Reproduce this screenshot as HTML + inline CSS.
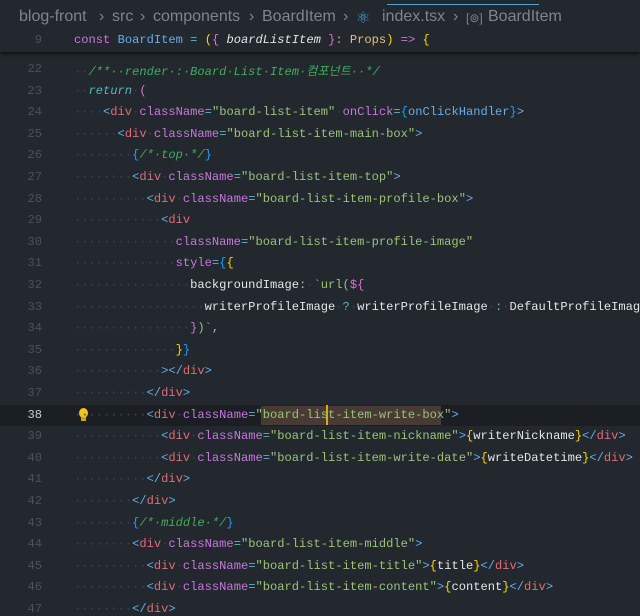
<!DOCTYPE html><html><head><meta charset="utf-8"><style>
body{margin:0;width:640px;height:608px;background:#23272e;overflow:hidden;position:relative;font-family:"Liberation Mono","Noto Sans CJK KR",monospace;font-size:12.1px;color:#abb2bf}
.bc{position:absolute;top:8px;font:16px "Liberation Sans",sans-serif;color:#7f848e;white-space:pre}
.ln{position:absolute;left:0;width:42px;text-align:right;color:#495162;font-size:12.1px}
.c{position:absolute;left:74px;white-space:pre}
.d{color:#3e4451}.t{color:#e06c75}.a{color:#c678dd}.s{color:#98c379}.y{color:#ffd700}.m{color:#da70d6}.b{color:#179fff}.w{color:#e5e5e5}.k{color:#56b6c2;font-style:italic}.cm{color:#3fae5a;font-style:italic}.v{color:#e5c07b}.bl{color:#61afef}.o{color:#56b6c2}
</style></head><body>
<div style="position:absolute;left:387px;top:4px;width:152px;height:1px;background:#4aa3c9"></div>
<div class="bc" style="left:19px">blog-front</div><div class="bc" style="left:99px">›</div>
<div class="bc" style="left:112px">src</div><div class="bc" style="left:140px">›</div>
<div class="bc" style="left:153px">components</div><div class="bc" style="left:249px">›</div>
<div class="bc" style="left:262px">BoardItem</div><div class="bc" style="left:343px">›</div>
<div class="bc" style="left:356px;color:#3fa7e0">⚛</div>
<div class="bc" style="left:382px">index.tsx</div><div class="bc" style="left:453px">›</div>
<div class="bc" style="left:466px;font-size:12px;top:11px">[⊚]</div>
<div class="bc" style="left:488px">BoardItem</div>
<div style="position:absolute;left:0;top:30px;width:640px;height:22px;background:#23272e;box-shadow:0 2px 3px #111"></div>
<div class="ln" style="top:33px">9</div>
<div class="c" style="top:33px"><span class="a">const</span> <span class="bl">BoardItem</span> <span class="o">=</span> <span class="y">(</span><span class="m">{</span> <span class="w" style="font-style:italic">boardListItem</span> <span class="m">}</span>: <span class="v">Props</span><span class="y">)</span> <span class="a">=&gt;</span> <span class="y">{</span></div>
<div style="position:absolute;left:0;top:405px;width:640px;height:21px;background:#1b1e23"></div>
<div style="position:absolute;left:261px;top:406px;width:180px;height:19px;background:#4a3a34"></div>
<div style="position:absolute;left:326px;top:405px;width:2px;height:20px;background:#e5a50a"></div>
<div style="position:absolute;left:79px;top:408px;width:9px;height:10px;border-radius:50%;background:#f2c41a"></div>
<div style="position:absolute;left:81px;top:417px;width:5px;height:4px;background:#c9a020"></div>

<div class="ln" style="top:62px">22</div><div class="c" style="top:62px"><span class="d">··</span><span class="cm">/**··render·:·Board·List·Item·컴포넌트··*/</span></div>
<div class="ln" style="top:83.6px">23</div><div class="c" style="top:83.6px"><span class="d">··</span><span class="k">return</span><span class="d">·</span><span class="m">(</span></div>
<div class="ln" style="top:105.2px">24</div><div class="c" style="top:105.2px"><span class="d">····</span><span class="bl">&lt;</span><span class="t">div</span><span class="d">·</span><span class="a">className</span><span class="o">=</span><span class="s">"board-list-item"</span><span class="d">·</span><span class="a">onClick</span><span class="o">=</span><span class="b">{</span><span class="bl">onClickHandler</span><span class="b">}</span><span class="bl">&gt;</span></div>
<div class="ln" style="top:126.8px">25</div><div class="c" style="top:126.8px"><span class="d">······</span><span class="bl">&lt;</span><span class="t">div</span><span class="d">·</span><span class="a">className</span><span class="o">=</span><span class="s">"board-list-item-main-box"</span><span class="bl">&gt;</span></div>
<div class="ln" style="top:148.4px">26</div><div class="c" style="top:148.4px"><span class="d">········</span><span class="b">{</span><span class="cm">/*·top·*/</span><span class="b">}</span></div>
<div class="ln" style="top:170px">27</div><div class="c" style="top:170px"><span class="d">········</span><span class="bl">&lt;</span><span class="t">div</span><span class="d">·</span><span class="a">className</span><span class="o">=</span><span class="s">"board-list-item-top"</span><span class="bl">&gt;</span></div>
<div class="ln" style="top:191.6px">28</div><div class="c" style="top:191.6px"><span class="d">··········</span><span class="bl">&lt;</span><span class="t">div</span><span class="d">·</span><span class="a">className</span><span class="o">=</span><span class="s">"board-list-item-profile-box"</span><span class="bl">&gt;</span></div>
<div class="ln" style="top:213.2px">29</div><div class="c" style="top:213.2px"><span class="d">············</span><span class="bl">&lt;</span><span class="t">div</span></div>
<div class="ln" style="top:234.8px">30</div><div class="c" style="top:234.8px"><span class="d">··············</span><span class="a">className</span><span class="o">=</span><span class="s">"board-list-item-profile-image"</span></div>
<div class="ln" style="top:256.4px">31</div><div class="c" style="top:256.4px"><span class="d">··············</span><span class="a">style</span><span class="o">=</span><span class="b">{</span><span class="y">{</span></div>
<div class="ln" style="top:278px">32</div><div class="c" style="top:278px"><span class="d">················</span><span class="w">backgroundImage</span>:<span class="d">·</span><span class="s">`url(</span><span class="m">${</span></div>
<div class="ln" style="top:299.6px">33</div><div class="c" style="top:299.6px"><span class="d">··················</span><span class="w">writerProfileImage</span><span class="d">·</span><span class="o">?</span><span class="d">·</span><span class="w">writerProfileImage</span><span class="d">·</span><span class="o">:</span><span class="d">·</span><span class="w">DefaultProfileImage</span></div>
<div class="ln" style="top:321.2px">34</div><div class="c" style="top:321.2px"><span class="d">················</span><span class="m">}</span><span class="s">)`</span>,</div>
<div class="ln" style="top:342.8px">35</div><div class="c" style="top:342.8px"><span class="d">··············</span><span class="y">}</span><span class="b">}</span></div>
<div class="ln" style="top:364.4px">36</div><div class="c" style="top:364.4px"><span class="d">············</span><span class="bl">&gt;&lt;/</span><span class="t">div</span><span class="bl">&gt;</span></div>
<div class="ln" style="top:386px">37</div><div class="c" style="top:386px"><span class="d">··········</span><span class="bl">&lt;/</span><span class="t">div</span><span class="bl">&gt;</span></div>
<div class="ln" style="top:407.6px;color:#c8ccd4">38</div><div class="c" style="top:407.6px"><span class="d">··········</span><span class="bl">&lt;</span><span class="t">div</span><span class="d">·</span><span class="a">className</span><span class="o">=</span><span class="s">"board-list-item-write-box"</span><span class="bl">&gt;</span></div>
<div class="ln" style="top:429.2px">39</div><div class="c" style="top:429.2px"><span class="d">············</span><span class="bl">&lt;</span><span class="t">div</span><span class="d">·</span><span class="a">className</span><span class="o">=</span><span class="s">"board-list-item-nickname"</span><span class="bl">&gt;</span><span class="y">{</span><span class="w">writerNickname</span><span class="y">}</span><span class="bl">&lt;/</span><span class="t">div</span><span class="bl">&gt;</span></div>
<div class="ln" style="top:450.8px">40</div><div class="c" style="top:450.8px"><span class="d">············</span><span class="bl">&lt;</span><span class="t">div</span><span class="d">·</span><span class="a">className</span><span class="o">=</span><span class="s">"board-list-item-write-date"</span><span class="bl">&gt;</span><span class="y">{</span><span class="w">writeDatetime</span><span class="y">}</span><span class="bl">&lt;/</span><span class="t">div</span><span class="bl">&gt;</span></div>
<div class="ln" style="top:472.4px">41</div><div class="c" style="top:472.4px"><span class="d">··········</span><span class="bl">&lt;/</span><span class="t">div</span><span class="bl">&gt;</span></div>
<div class="ln" style="top:494px">42</div><div class="c" style="top:494px"><span class="d">········</span><span class="bl">&lt;/</span><span class="t">div</span><span class="bl">&gt;</span></div>
<div class="ln" style="top:515.6px">43</div><div class="c" style="top:515.6px"><span class="d">········</span><span class="b">{</span><span class="cm">/*·middle·*/</span><span class="b">}</span></div>
<div class="ln" style="top:537.2px">44</div><div class="c" style="top:537.2px"><span class="d">········</span><span class="bl">&lt;</span><span class="t">div</span><span class="d">·</span><span class="a">className</span><span class="o">=</span><span class="s">"board-list-item-middle"</span><span class="bl">&gt;</span></div>
<div class="ln" style="top:558.8px">45</div><div class="c" style="top:558.8px"><span class="d">··········</span><span class="bl">&lt;</span><span class="t">div</span><span class="d">·</span><span class="a">className</span><span class="o">=</span><span class="s">"board-list-item-title"</span><span class="bl">&gt;</span><span class="y">{</span><span class="w">title</span><span class="y">}</span><span class="bl">&lt;/</span><span class="t">div</span><span class="bl">&gt;</span></div>
<div class="ln" style="top:580.4px">46</div><div class="c" style="top:580.4px"><span class="d">··········</span><span class="bl">&lt;</span><span class="t">div</span><span class="d">·</span><span class="a">className</span><span class="o">=</span><span class="s">"board-list-item-content"</span><span class="bl">&gt;</span><span class="y">{</span><span class="w">content</span><span class="y">}</span><span class="bl">&lt;/</span><span class="t">div</span><span class="bl">&gt;</span></div>
<div class="ln" style="top:602px">47</div><div class="c" style="top:602px"><span class="d">········</span><span class="bl">&lt;/</span><span class="t">div</span><span class="bl">&gt;</span></div>
</body></html>
